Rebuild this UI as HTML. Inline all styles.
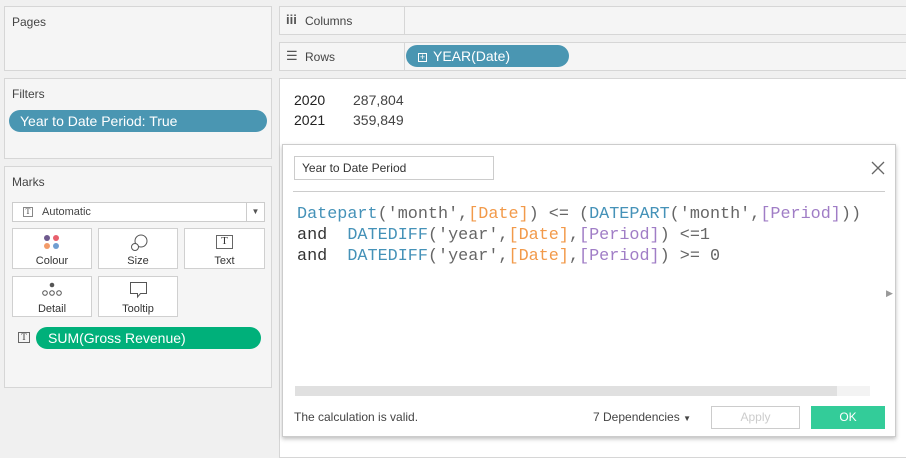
<!DOCTYPE html>
<html><head><style>
*{box-sizing:border-box;margin:0;padding:0}
body{width:906px;height:450px;background:#f0f0f0;font-family:"Liberation Sans",sans-serif;position:relative;overflow:hidden;color:#333}
.a{position:absolute}
.panel{position:absolute;background:#f5f5f5;border:1px solid #d6d6d6}
.lbl{font-size:12px;color:#444}
.pill{position:absolute;border-radius:12px;color:#fff;font-size:14px;line-height:22px;padding-left:11px}
.btn{position:absolute;background:#fff;border:1px solid #d0d0d0;font-size:11px;text-align:center;color:#333}
.code{font-family:"Liberation Mono",monospace;font-size:16.8px;line-height:21px;color:#333;white-space:pre}
.f{color:#4592b8}.s{color:#666}.d{color:#f29a4a}.p{color:#a07dc6}
</style></head><body>
<div class="panel" style="left:4px;top:6px;width:268px;height:65px"><div class="lbl a" style="left:7px;top:8px">Pages</div></div>
<div class="panel" style="left:4px;top:78px;width:268px;height:81px"><div class="lbl a" style="left:7px;top:8px">Filters</div></div>
<div class="pill" style="left:9px;top:110px;width:258px;background:#4a96b2">Year to Date Period: True</div>
<div class="panel" style="left:4px;top:166px;width:268px;height:222px">
<div class="lbl a" style="left:7px;top:8px">Marks</div>
<div class="a" style="left:7px;top:35px;width:253px;height:20px;background:#fff;border:1px solid #ccc;font-size:11px;line-height:18px;padding-left:29px;color:#444">Automatic
<div class="a" style="left:10px;top:4px;width:10px;height:10px;border:1px solid #888;font-family:'Liberation Serif',serif;font-size:8px;line-height:8px;text-align:center;padding:0">T</div>
<div class="a" style="right:0;top:0;width:18px;height:18px;border-left:1px solid #ccc;font-size:8px;text-align:center;color:#555;padding:0">▼</div></div>
</div>
<div class="btn" style="left:12px;top:228px;width:80px;height:41px"><div class="a" style="left:31px;top:6px;width:6px;height:6px;border-radius:3px;background:#6f5a8e"></div><div class="a" style="left:40px;top:6px;width:6px;height:6px;border-radius:3px;background:#e8606d"></div><div class="a" style="left:31px;top:14px;width:6px;height:6px;border-radius:3px;background:#f39b69"></div><div class="a" style="left:40px;top:14px;width:6px;height:6px;border-radius:3px;background:#6f9ed1"></div><div class="a" style="left:0;top:26px;width:78px">Colour</div></div>
<div class="btn" style="left:98px;top:228px;width:80px;height:41px"><svg class="a" style="left:30px;top:4px" width="20" height="20"><circle cx="12" cy="8" r="6" fill="none" stroke="#555"/><circle cx="6" cy="14" r="3.5" fill="#fff" stroke="#555"/></svg><div class="a" style="left:0;top:26px;width:78px">Size</div></div>
<div class="btn" style="left:184px;top:228px;width:81px;height:41px"><div class="a" style="left:31px;top:6px;width:17px;height:14px;border:1.5px solid #666;font-family:'Liberation Serif',serif;font-size:11px;line-height:11px">T</div><div class="a" style="left:0;top:26px;width:79px">Text</div></div>
<div class="btn" style="left:12px;top:276px;width:80px;height:41px"><svg class="a" style="left:28px;top:5px" width="22" height="16"><circle cx="11" cy="3" r="2.3" fill="#555"/><circle cx="4" cy="11" r="2.3" fill="none" stroke="#555"/><circle cx="11" cy="11" r="2.3" fill="none" stroke="#555"/><circle cx="18" cy="11" r="2.3" fill="none" stroke="#555"/></svg><div class="a" style="left:0;top:26px;width:78px">Detail</div></div>
<div class="btn" style="left:98px;top:276px;width:80px;height:41px"><svg class="a" style="left:30px;top:4px" width="20" height="18"><path d="M1.5 1.5h16v11h-6l-3 3.5v-3.5h-7z" fill="none" stroke="#555"/></svg><div class="a" style="left:0;top:26px;width:78px">Tooltip</div></div>
<div class="a" style="left:18px;top:332px;width:12px;height:11px;border:1px solid #666;font-family:'Liberation Serif',serif;font-size:9px;line-height:9px;text-align:center">T</div>
<div class="pill" style="left:36px;top:327px;width:225px;background:#00b07a;padding-left:12px">SUM(Gross Revenue)</div>

<div class="panel" style="left:279px;top:6px;width:630px;height:29px"><div class="a" style="left:124px;top:0;width:1px;height:28px;background:#d6d6d6"></div><div class="a" style="left:6px;top:5px;font-size:13px;font-weight:bold;color:#555">iii</div><div class="lbl a" style="left:25px;top:7px">Columns</div></div>
<div class="panel" style="left:279px;top:42px;width:630px;height:29px"><div class="a" style="left:124px;top:0;width:1px;height:28px;background:#d6d6d6"></div><div class="a" style="left:6px;top:5px;font-size:13px;color:#555">☰</div><div class="lbl a" style="left:25px;top:7px">Rows</div></div>
<div class="pill" style="left:406px;top:45px;width:163px;background:#4a96b2;padding-left:12px"><span style="display:inline-block;width:9px;height:9px;border:1px solid #fff;font-size:9px;line-height:7px;text-align:center;vertical-align:1px;margin-right:6px">+</span>YEAR(Date)</div>
<div class="a" style="left:279px;top:78px;width:630px;height:380px;background:#fff;border:1px solid #d6d6d6"></div>
<div class="a" style="left:294px;top:90px;font-size:14px;line-height:20px;color:#222">2020<br>2021</div>
<div class="a" style="left:353px;top:90px;font-size:14px;line-height:20px;color:#444">287,804<br>359,849</div>

<div class="a" style="left:282px;top:144px;width:614px;height:293px;background:#fff;border:1px solid #ccc;box-shadow:0 2px 4px rgba(0,0,0,.25)">
<div class="a" style="left:11px;top:11px;width:200px;height:24px;border:1px solid #ccc;font-size:12px;line-height:22px;padding-left:7px;color:#333">Year to Date Period</div>
<svg class="a" style="left:588px;top:16px" width="14" height="14"><path d="M1 1L13 13M13 1L1 13" stroke="#666" stroke-width="1.3"/></svg>
<div class="a" style="left:10px;top:46px;width:592px;height:1px;background:#ccc"></div>
<div class="a code" style="left:14px;top:59px"><span class="f">Datepart</span><span class="s">('month',</span><span class="d">[Date]</span><span class="s">) &lt;= (</span><span class="f">DATEPART</span><span class="s">('month',</span><span class="p">[Period]</span><span class="s">))</span>
and  <span class="f">DATEDIFF</span><span class="s">('year',</span><span class="d">[Date]</span><span class="s">,</span><span class="p">[Period]</span><span class="s">) &lt;=1</span>
and  <span class="f">DATEDIFF</span><span class="s">('year',</span><span class="d">[Date]</span><span class="s">,</span><span class="p">[Period]</span><span class="s">) &gt;= 0</span></div>
<div class="a" style="left:603px;top:143px;font-size:9px;color:#999">▶</div>
<div class="a" style="left:12px;top:241px;width:575px;height:10px;background:#f3f3f3"><div style="width:542px;height:10px;background:#e0e0e0"></div></div>
<div class="a" style="left:11px;top:265px;font-size:12px;color:#444">The calculation is valid.</div>
<div class="a" style="left:310px;top:265px;font-size:12px;color:#444">7 Dependencies <span style="font-size:8px">▼</span></div>
<div class="a" style="left:428px;top:261px;width:89px;height:23px;border:1px solid #ccc;font-size:12px;line-height:21px;text-align:center;color:#ccc">Apply</div>
<div class="a" style="left:528px;top:261px;width:74px;height:23px;background:#33cc99;font-size:12px;line-height:23px;text-align:center;color:#fff">OK</div>
</div>
</body></html>
